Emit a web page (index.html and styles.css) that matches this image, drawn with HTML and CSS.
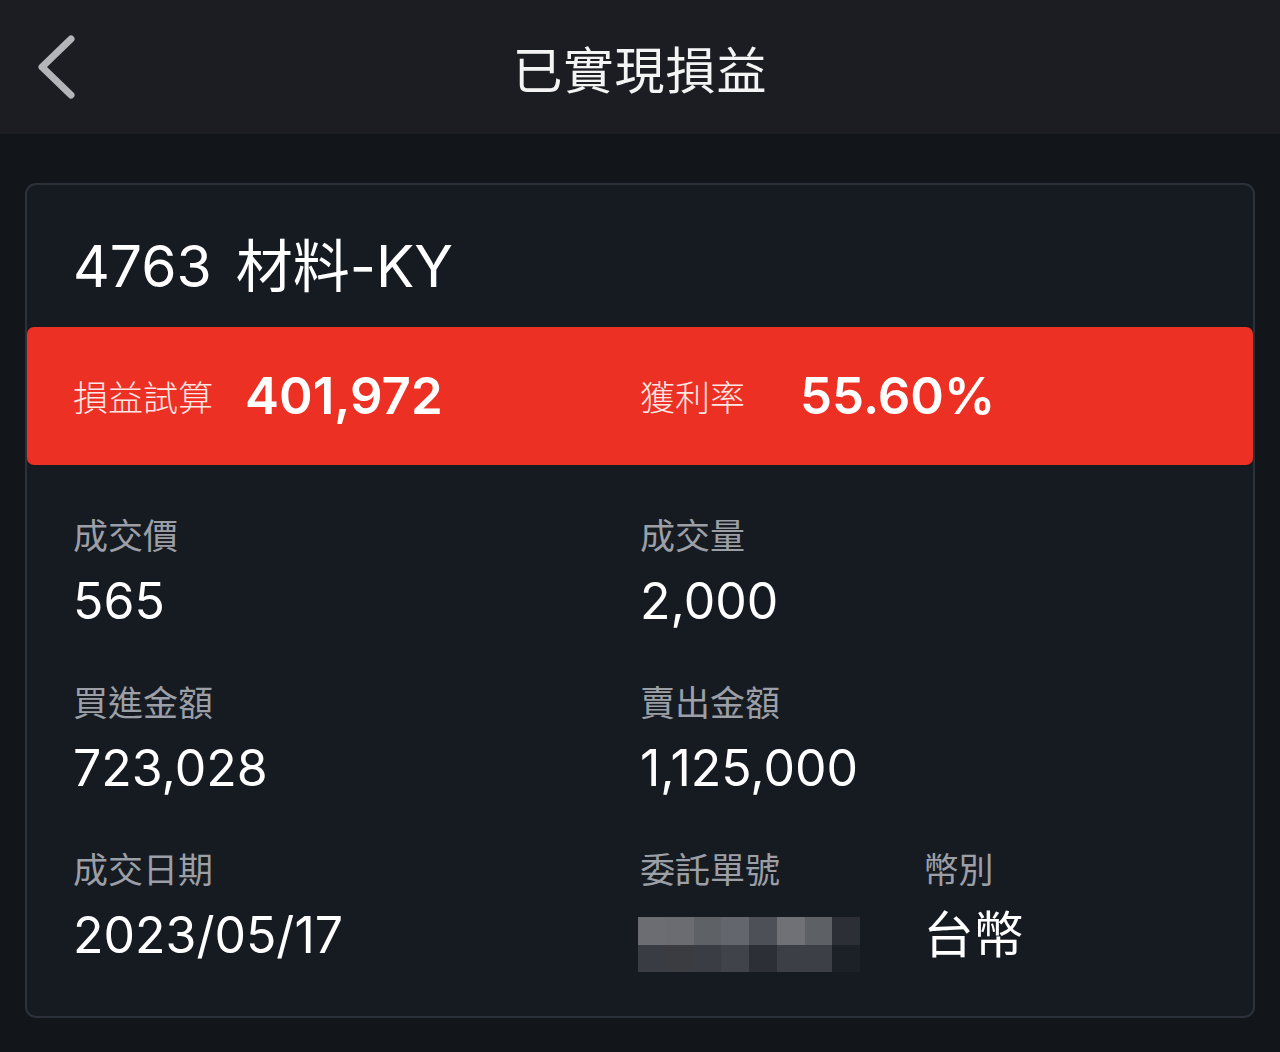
FILE: index.html
```html
<!DOCTYPE html>
<html lang="zh-Hant">
	<head>
		<meta charset="utf-8">
		<title>已實現損益</title>
		<meta name="viewport" content="width=device-width, initial-scale=1">
		<link rel="stylesheet" href="styles.css">
	</head>
	<body>
		<header class="topbar">
			<a class="back" href="#" aria-label="返回">
				<svg width="44" height="72" viewBox="0 0 44 72" aria-hidden="true">
					<path d="M35 8 L6 36 L35 64" fill="none" stroke="#b4b5b8" stroke-width="7" stroke-linecap="round" stroke-linejoin="round"/>
				</svg>
			</a>
			<h1>已實現損益</h1>
		</header>

		<main>
			<section class="card" aria-label="損益明細">
				<h2 class="stock">4763&nbsp; 材料-KY</h2>

				<div class="profit">
					<div class="pair">
						<span class="plabel">損益試算</span>
						<span class="pvalue">401,972</span>
					</div>
					<div class="pair">
						<span class="plabel wide">獲利率</span>
						<span class="pvalue">55.60%</span>
					</div>
				</div>

				<dl class="details">
					<div class="item half">
						<dt>成交價</dt>
						<dd>565</dd>
					</div>
					<div class="item half">
						<dt>成交量</dt>
						<dd>2,000</dd>
					</div>
					<div class="item half">
						<dt>買進金額</dt>
						<dd>723,028</dd>
					</div>
					<div class="item half">
						<dt>賣出金額</dt>
						<dd>1,125,000</dd>
					</div>
					<div class="item half">
						<dt>成交日期</dt>
						<dd>2023/05/17</dd>
					</div>
					<div class="item">
						<dt>委託單號</dt>
						<dd>
							<div class="masked" aria-label="已遮蔽">
								<i style="background:#6b6d72"></i><i style="background:#6a6c71"></i><i style="background:#5e6166"></i><i style="background:#63666d"></i><i style="background:#4d5057"></i><i style="background:#6f7176"></i><i style="background:#5d6065"></i><i style="background:#2c2f35"></i>
								<i style="background:#3a3c43"></i><i style="background:#3a3c42"></i><i style="background:#3a3d44"></i><i style="background:#40434a"></i><i style="background:#2c2f35"></i><i style="background:#3c3f46"></i><i style="background:#3c3f46"></i><i style="background:#1c2027"></i>
							</div>
						</dd>
					</div>
					<div class="item">
						<dt>幣別</dt>
						<dd>台幣</dd>
					</div>
				</dl>
			</section>
		</main>
	</body>
</html>
```

FILE: styles.css
```css
html {
	background: #121519;
}
body {
	margin: 0;
	background: #121519;
	color: #ffffff;
	font-family: Inter, "Noto Sans CJK TC", sans-serif;
}

/* top bar */
header.topbar {
	height: 134px;
	background: #1c1d22;
	display: flex;
	align-items: center;
	justify-content: center;
	position: relative;
}
header.topbar h1 {
	margin: 0;
	font-family: "Noto Sans CJK TC", sans-serif;
	font-weight: 400;
	font-size: 50px;
	line-height: 60px;
	letter-spacing: 1px;
	color: #f4f4f5;
}
a.back {
	position: absolute;
	left: 36px;
	top: 31px;
	display: block;
	width: 44px;
	height: 72px;
}

main {
	padding: 49px 25px 0;
}

/* card */
section.card {
	border: 2px solid #2c3038;
	border-radius: 11px;
	background: #161b22;
	overflow: hidden;
}
h2.stock {
	margin: 0;
	padding: 52px 46px 30px;
	font-size: 57px;
	line-height: 60px;
	font-weight: 400;
	word-spacing: -4px;
	color: #ffffff;
}

/* red band */
div.profit {
	height: 138px;
	background: #ec3024;
	border-radius: 7px;
	padding: 0 46px;
	display: grid;
	grid-template-columns: 1fr 1fr;
	align-items: center;
}
div.pair {
	display: flex;
	align-items: center;
	gap: 32px;
}
span.plabel {
	font-family: "Noto Sans CJK TC", sans-serif;
	font-size: 35px;
	font-weight: 300;
	line-height: 40px;
	color: #fde6e3;
}
span.plabel.wide {
	min-width: 128px;
}
span.pvalue {
	font-size: 51px;
	line-height: 60px;
	font-weight: 600;
	color: #ffffff;
}

/* detail grid */
dl.details {
	margin: 0;
	padding: 49px 46px 51px;
	display: grid;
	grid-template-columns: repeat(4, 1fr);
	row-gap: 50px;
}
div.item.half {
	grid-column: span 2;
}
div.item dt {
	font-family: "Noto Sans CJK TC", sans-serif;
	font-size: 35px;
	line-height: 40px;
	color: #9c9fa6;
}
div.item dd {
	margin: 17px 0 0;
	font-size: 50px;
	line-height: 60px;
	color: #ffffff;
	white-space: nowrap;
}
div.masked {
	display: grid;
	grid-template-columns: repeat(8, 27.75px);
	grid-auto-rows: 27.5px;
	width: 222px;
	margin: 29px 0 -24px -2px;
	filter: blur(0.6px);
}
div.masked i {
	display: block;
}
```
